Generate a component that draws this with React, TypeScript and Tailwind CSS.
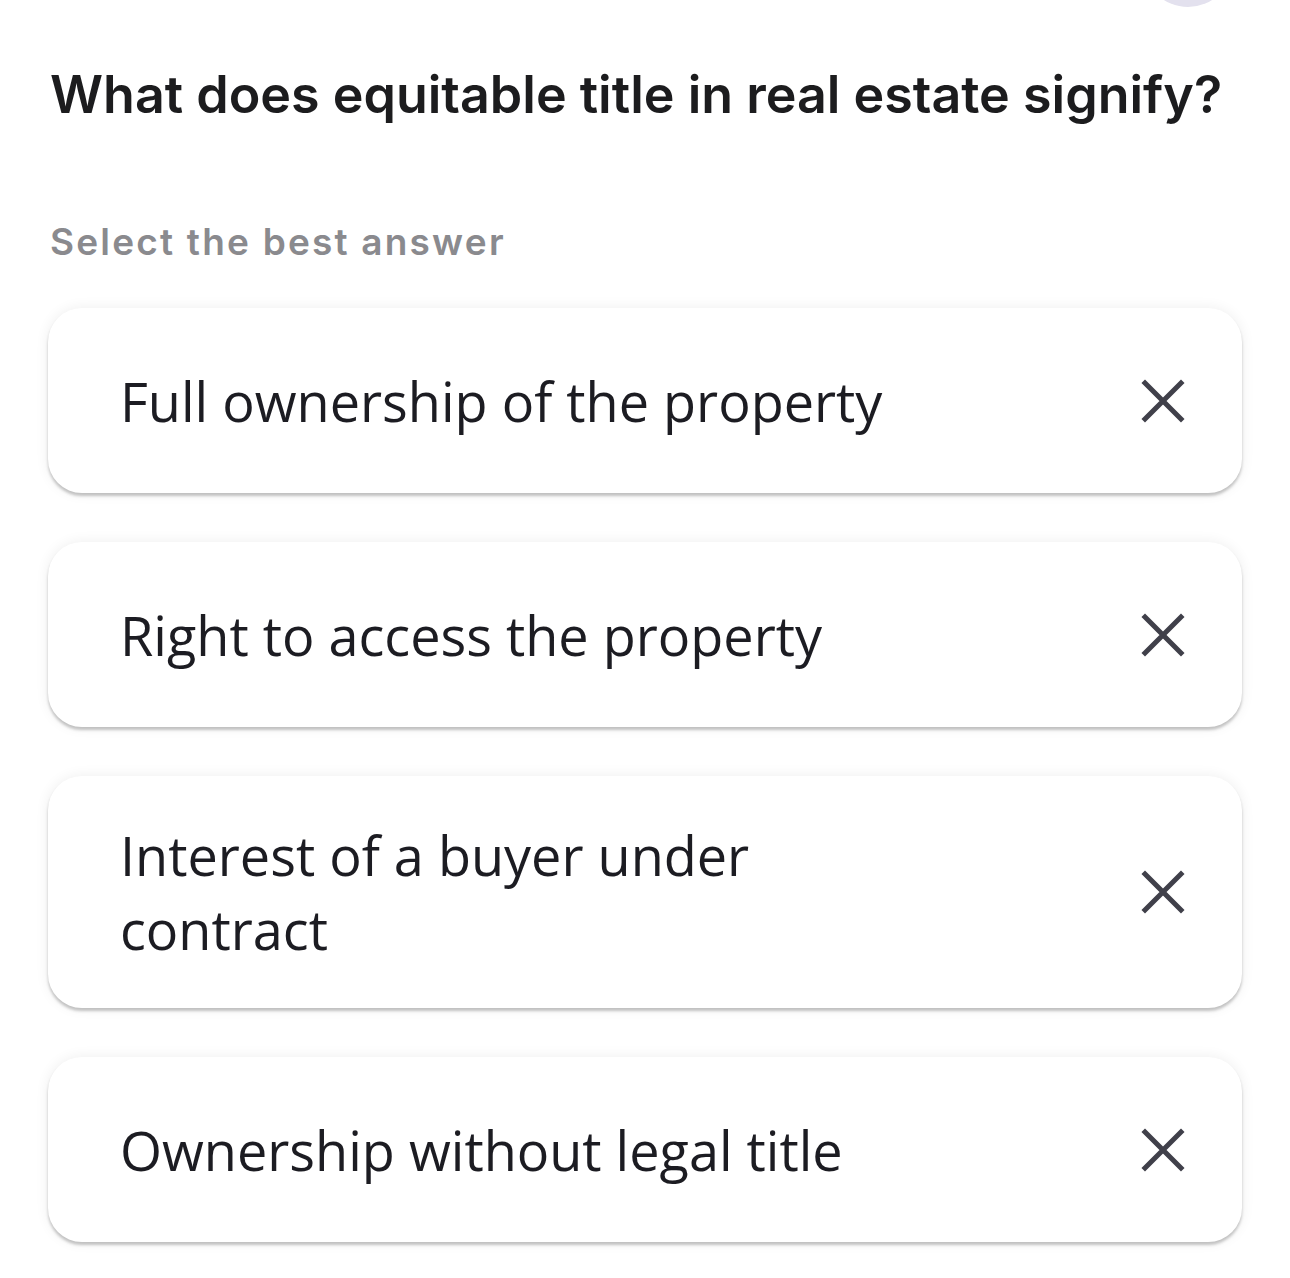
import React from "react";

const options = [
  "Full ownership of the property",
  "Right to access the property",
  "Interest of a buyer under contract",
  "Ownership without legal title",
];

function XIcon() {
  return (
    <svg width="44" height="44" viewBox="0 0 44 44" fill="none" className="shrink-0">
      <path d="M4 4 L40 40 M40 4 L4 40" stroke="#40404a" strokeWidth="5" strokeLinecap="square" />
    </svg>
  );
}

export default function App() {
  return (
    <div className="relative min-h-[1278px] w-[1290px] overflow-hidden bg-white">
      <div className="absolute left-[1143px] top-[-83px] h-[90px] w-[90px] rounded-full bg-[#e3e1ee]" />
      <div className="px-[48px] pt-[60px]">
        <h1
          className="pl-[2px] text-[52px] font-semibold leading-[70px] text-[#1c1c1e]"
          style={{ fontFamily: "Inter, 'Liberation Sans', sans-serif" }}
        >
          What does equitable title in real estate signify?
        </h1>
        <p
          className="mt-[90px] pl-[2px] text-[37px] font-semibold leading-[44px] tracking-[2.2px] text-[#8a8a8e]"
          style={{ fontFamily: "Inter, 'Liberation Sans', sans-serif" }}
        >
          Select the best answer
        </p>
        <div className="mt-[44px] flex flex-col gap-[49px]">
          {options.map((o) => (
            <div
              key={o}
              className="flex min-h-[185px] items-center justify-between rounded-[34px] bg-white py-[42px] pl-[72px] pr-[57px] shadow-[0_3px_3px_rgba(0,0,0,0.22),0_0_14px_rgba(0,0,0,0.07)]"
            >
              <span
                className="max-w-[800px] text-[54px] leading-[74px] text-[#1c1c22]"
                style={{ fontFamily: "'Open Sans', 'Noto Sans', sans-serif" }}
              >
                {o}
              </span>
              <XIcon />
            </div>
          ))}
        </div>
      </div>
    </div>
  );
}
